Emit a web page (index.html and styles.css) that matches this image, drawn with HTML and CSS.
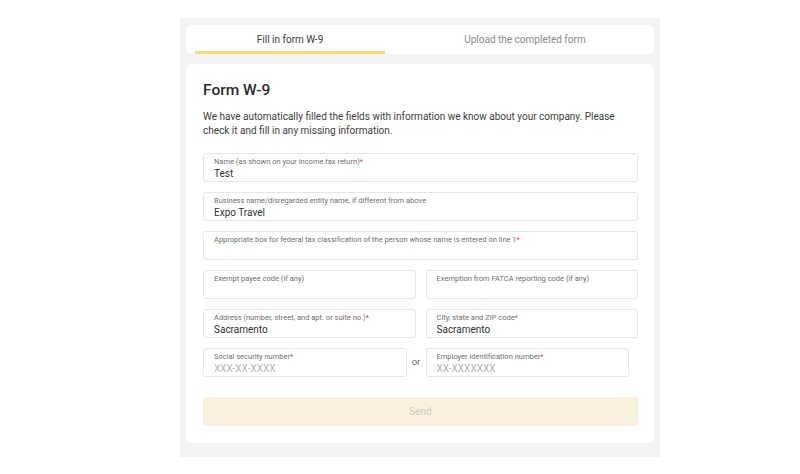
FILE: index.html
```html
<!DOCTYPE html>
<html lang="en">
<head>
<meta charset="UTF-8">
<meta name="viewport" content="width=device-width, initial-scale=1.0">
<title>Form W-9</title>
<link rel="stylesheet" href="styles.css">
</head>
<body>
    <div class="panel">
        <div class="tabs">
            <div class="tab active">Fill in form W-9</div>
            <div class="tab">Upload the completed form</div>
        </div>

        <div class="card">
            <h1 class="title">Form W-9</h1>
            <p class="intro">We have automatically filled the fields with information we know about your company. Please check it and fill in any missing information.</p>

            <div class="field">
                <label>Name (as shown on your income tax return)<span class="req">*</span></label>
                <input type="text" value="Test">
            </div>
            <div class="field">
                <label>Business name/disregarded entity name, if different from above</label>
                <input type="text" value="Expo Travel">
            </div>
            <div class="field">
                <label>Appropriate box for federal tax classification of the person whose name is entered on line 1<span class="req">*</span></label>
                <input type="text" value="">
            </div>
            <div class="pair">
                <div class="field">
                    <label>Exempt payee code (if any)</label>
                    <input type="text" value="">
                </div>
                <div class="field">
                    <label>Exemption from FATCA reporting code (if any)</label>
                    <input type="text" value="">
                </div>
            </div>
            <div class="pair">
                <div class="field">
                    <label>Address (number, street, and apt. or suite no.)<span class="req">*</span></label>
                    <input type="text" value="Sacramento">
                </div>
                <div class="field">
                    <label>City, state and ZIP code<span class="req">*</span></label>
                    <input type="text" value="Sacramento">
                </div>
            </div>
            <div class="pair ids">
                <div class="field">
                    <label>Social security number<span class="req">*</span></label>
                    <input type="text" placeholder="XXX-XX-XXXX">
                </div>
                <span class="or">or</span>
                <div class="field">
                    <label>Employer identification number<span class="req">*</span></label>
                    <input type="text" placeholder="XX-XXXXXXX">
                </div>
            </div>

            <button class="send" disabled>Send</button>
        </div>
    </div>
</body>
</html>
```

FILE: styles.css
```css
/* Page */
body {
    margin: 0;
    background: #fff;
    font-family: Roboto, "Liberation Sans", sans-serif;
    color: #333;
}

.panel {
    width: 468px;
    margin: 18px 0 0 180px;
    padding: 7px 6px 14px;
    background-color: #f3f3f3;
}

/* Tabs */
.tabs {
    display: flex;
    background: #fff;
    border-radius: 5px;
    padding: 0 9px;
    height: 29px;
}

.tab {
    display: flex;
    justify-content: center;
    align-items: center;
    font-size: 10px;
    color: #8a8a8a;
    border-bottom: 3px solid transparent;
    padding-top: 2px;
}

.tab.active {
    width: 190px;
    color: #3a3a3a;
    border-bottom-color: #fdd976;
}

.tab + .tab {
    flex: 1;
    padding-left: 20px;
}

/* Form card */
.card {
    margin-top: 10px;
    background: #fff;
    border-radius: 5px;
    padding: 18px 16px 17px 17px;
}

.title {
    margin: 0;
    font-size: 15.5px;
    font-weight: 500;
    color: #2b2b2b;
    line-height: 17px;
}

.intro {
    margin: 11px 0 15px;
    font-size: 10px;
    line-height: 14px;
    color: #3c3c3c;
}

.field {
    display: flex;
    flex-direction: column;
    height: 29px;
    box-sizing: border-box;
    border: 1px solid #e6e6e6;
    border-radius: 3px;
    padding: 3px 10px 0;
    margin-bottom: 10px;
}

.field label {
    font-size: 7.5px;
    line-height: 9px;
    color: #6f6f6f;
}

.req {
    color: #e04545;
}

.field input {
    border: 0;
    outline: none;
    padding: 0;
    margin: 1px 0 0;
    font-family: inherit;
    font-size: 10px;
    line-height: 13px;
    color: #2f2f2f;
    background: transparent;
}

.field input::placeholder {
    color: #b5b5b5;
}

.pair {
    display: flex;
    gap: 10px;
}

.pair .field {
    flex: 1;
}

.ids {
    padding-right: 9px;
    gap: 0;
}

.ids .or {
    width: 19px;
    text-align: center;
    font-size: 9.5px;
    color: #666;
    padding-top: 8px;
}

.send {
    display: block;
    width: 100%;
    height: 29px;
    margin-top: 10px;
    border: 0;
    border-radius: 3px;
    background: #faf0de;
    color: #cfcac4;
    font-family: inherit;
    font-size: 10px;
}
```
